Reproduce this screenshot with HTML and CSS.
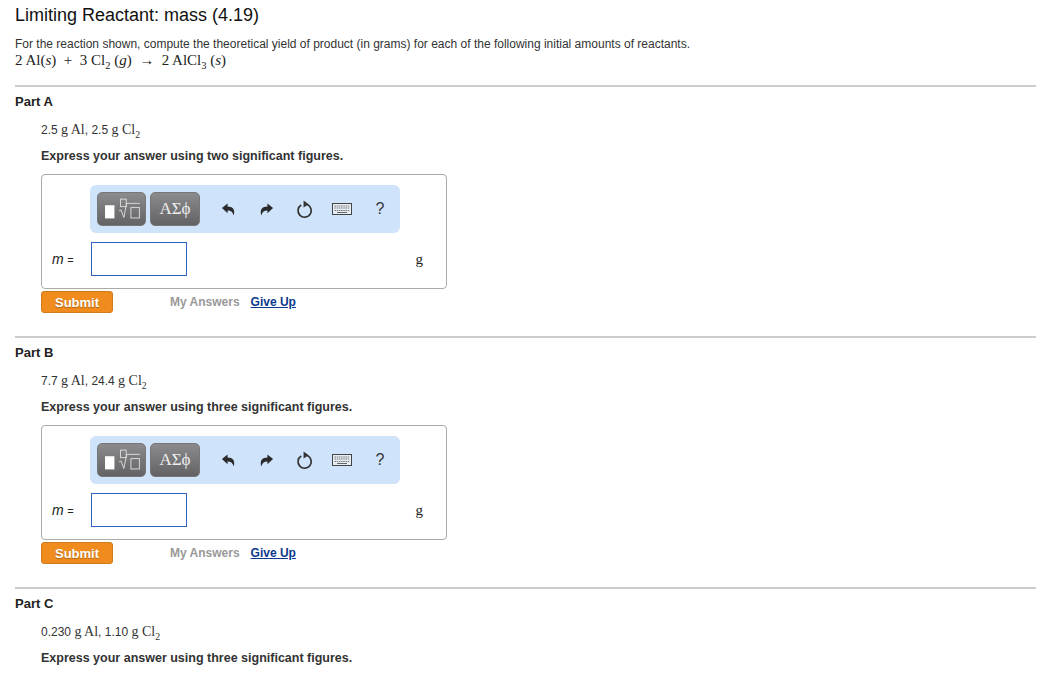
FILE: index.html
```html
<!DOCTYPE html>
<html lang="en">
<head>
  <meta charset="UTF-8" />
  <title>Limiting Reactant: mass (4.19)</title>
  <link rel="stylesheet" href="styles.css">
</head>
<body>
  <svg class="icon-defs" xmlns="http://www.w3.org/2000/svg">
    <symbol id="i-template" viewBox="0 0 49 34">
      <rect x="7" y="13" width="10" height="14" fill="#fff"/>
      <rect x="23.5" y="6.5" width="6" height="8" fill="none" stroke="#ddd" stroke-width="1"/>
      <path d="M22 19l2-1 3 8 3-15h14" fill="none" stroke="#ddd" stroke-width="1"/>
      <rect x="34.5" y="15.5" width="9" height="11" fill="none" stroke="#ddd" stroke-width="1"/>
    </symbol>
    <symbol id="i-undo" viewBox="0 0 16 16">
      <path d="M1 6.5L7 1.500V4.700C12.500 4.700 15.500 8 13.500 14.500C12.800 11 10.800 9 7 9V12Z" fill="#2b2b2b"/>
    </symbol>
    <symbol id="i-redo" viewBox="0 0 16 16">
      <path d="M15 6.500L9 1.500V4.700C3.500 4.700 .5 8 2.500 14.500C3.200 11 5.200 9 9 9V12Z" fill="#2b2b2b"/>
    </symbol>
    <symbol id="i-reset" viewBox="0 0 18 20">
      <path d="M5.500 5.200A7 7 0 1 0 12 4.800" fill="none" stroke="#333" stroke-width="1.800"/>
      <path d="M8 .5L13.500 4.500L8 8Z" fill="#333"/>
    </symbol>
    <symbol id="i-keys" viewBox="0 0 20 12">
      <rect x=".5" y=".5" width="19" height="11" fill="#e8eef5" stroke="#444"/>
      <path d="M2.500 3h15M2.500 5h15" stroke="#777" stroke-width="1" stroke-dasharray="1.500 .7"/>
      <path d="M2.500 7.500h15" stroke="#777" stroke-width="1" stroke-dasharray="1.500 .7"/>
      <path d="M5 9.500h10" stroke="#666" stroke-width="1"/>
    </symbol>
  </svg>

  <div class="page">
    <h1>Limiting Reactant: mass (4.19)</h1>
    <p class="intro">For the reaction shown, compute the theoretical yield of product (in grams) for each of the following initial amounts of reactants.</p>
    <p class="equation">2 Al(<i>s</i>) &nbsp;+&nbsp; 3 Cl<sub>2</sub> (<i>g</i>) &nbsp;→&nbsp; 2 AlCl<sub>3</sub> (<i>s</i>)</p>

    <section class="part">
      <h2>Part A</h2>
      <p class="amounts">2.5 <span class="m">g Al</span>, 2.5 <span class="m">g Cl<sub>2</sub></span></p>
      <p class="hint">Express your answer using two significant figures.</p>
      <div class="answer-box">
        <div class="toolbar">
          <button class="tool-btn"><svg class="tpl"><use href="#i-template"/></svg></button>
          <button class="tool-btn greek">ΑΣϕ</button>
          <span class="tool first"><svg class="ico"><use href="#i-undo"/></svg></span>
          <span class="tool"><svg class="ico"><use href="#i-redo"/></svg></span>
          <span class="tool"><svg class="ico-reset"><use href="#i-reset"/></svg></span>
          <span class="tool"><svg class="ico-keys"><use href="#i-keys"/></svg></span>
          <span class="tool help">?</span>
        </div>
        <div class="answer-row">
          <span class="var"><i>m</i> <small>=</small></span>
          <input class="answer-input" type="text" />
          <span class="unit">g</span>
        </div>
      </div>
      <div class="actions">
        <button class="submit">Submit</button>
        <a class="my-answers">My Answers</a>
        <a class="give-up" href="#">Give Up</a>
      </div>
    </section>

    <section class="part">
      <h2>Part B</h2>
      <p class="amounts">7.7 <span class="m">g Al</span>, 24.4 <span class="m">g Cl<sub>2</sub></span></p>
      <p class="hint">Express your answer using three significant figures.</p>
      <div class="answer-box">
        <div class="toolbar">
          <button class="tool-btn"><svg class="tpl"><use href="#i-template"/></svg></button>
          <button class="tool-btn greek">ΑΣϕ</button>
          <span class="tool first"><svg class="ico"><use href="#i-undo"/></svg></span>
          <span class="tool"><svg class="ico"><use href="#i-redo"/></svg></span>
          <span class="tool"><svg class="ico-reset"><use href="#i-reset"/></svg></span>
          <span class="tool"><svg class="ico-keys"><use href="#i-keys"/></svg></span>
          <span class="tool help">?</span>
        </div>
        <div class="answer-row">
          <span class="var"><i>m</i> <small>=</small></span>
          <input class="answer-input" type="text" />
          <span class="unit">g</span>
        </div>
      </div>
      <div class="actions">
        <button class="submit">Submit</button>
        <a class="my-answers">My Answers</a>
        <a class="give-up" href="#">Give Up</a>
      </div>
    </section>

    <section class="part last">
      <h2>Part C</h2>
      <p class="amounts">0.230 <span class="m">g Al</span>, 1.10 <span class="m">g Cl<sub>2</sub></span></p>
      <p class="hint">Express your answer using three significant figures.</p>
    </section>
  </div>
</body>
</html>
```

FILE: styles.css
```css
* {
  box-sizing: border-box;
  margin: 0;
  padding: 0;
  font-family: "Liberation Sans", Arial, sans-serif;
}

body {
  background-color: white;
  color: #222;
  overflow: hidden;
}

.icon-defs {
  display: none;
}

.page {
  padding: 4px 15px 0;
}

h1 {
  font-size: 18px;
  font-weight: normal;
  line-height: 22px;
  color: #111;
}

.intro {
  margin-top: 10px;
  font-size: 12px;
  line-height: 16px;
  color: #333;
}

.equation {
  font-family: "Liberation Serif", serif;
  font-size: 15px;
  line-height: 16px;
}

.equation i,
.equation sub,
.amounts .m,
.amounts sub {
  font-family: "Liberation Serif", serif;
}

sub {
  font-size: 70%;
  line-height: 0;
}

.part {
  margin-top: 17px;
  padding-top: 7px;
  border-top: 2px solid #ccc;
  height: 251px;
}

.part + .part {
  margin-top: 0;
}

.part.last {
  height: auto;
}

h2 {
  font-size: 13px;
  line-height: 16px;
  color: #222;
}

.amounts {
  margin: 12px 0 0 26px;
  font-size: 12px;
  line-height: 16px;
  color: #333;
}

.amounts .m {
  font-size: 14px;
}

.hint {
  margin: 10px 0 0 26px;
  font-size: 12.5px;
  font-weight: bold;
  line-height: 16px;
  color: #333;
}

.answer-box {
  margin: 10px 0 0 26px;
  width: 406px;
  height: 115px;
  border: 1px solid #aaa;
  border-radius: 4px;
  padding-top: 10px;
}

.toolbar {
  display: flex;
  align-items: center;
  margin-left: 48px;
  width: 310px;
  height: 48px;
  padding-left: 7px;
  background-color: #cfe3fb;
  border-radius: 6px;
}

.tool-btn {
  width: 49px;
  height: 34px;
  margin-right: 4px;
  border: 1px solid #777;
  border-radius: 5px;
  background: linear-gradient(#8b8b8e, #636365);
  color: #eee;
}

.tool-btn.greek {
  width: 50px;
  font-family: "Liberation Serif", serif;
  font-size: 17px;
}

.tpl {
  display: block;
  width: 47px;
  height: 32px;
}

.tool {
  display: flex;
  justify-content: center;
  align-items: center;
  width: 38px;
}

.tool.first {
  margin-left: 5px;
}

.ico {
  width: 15px;
  height: 15px;
}

.ico-reset {
  width: 17px;
  height: 19px;
}

.ico-keys {
  width: 20px;
  height: 12px;
}

.help {
  font-size: 16px;
  color: #333;
}

.answer-row {
  display: flex;
  align-items: center;
  margin-top: 9px;
  padding: 0 23px 0 10px;
}

.var {
  width: 39px;
  font-family: "Liberation Serif", serif;
  font-size: 14px;
}

.var small {
  font-family: "Liberation Sans", sans-serif;
  font-size: 11px;
}

.answer-input {
  width: 96px;
  height: 34px;
  border: 1px solid #2f62c0;
  background-color: white;
}

.unit {
  margin-left: auto;
  font-family: "Liberation Serif", serif;
  font-size: 15px;
}

.actions {
  display: flex;
  align-items: center;
  margin: 2px 0 0 26px;
  height: 22px;
  font-size: 12px;
  font-weight: bold;
}

.submit {
  width: 72px;
  height: 22px;
  border: 1px solid #cf7a1d;
  border-radius: 3px;
  background-color: #f08c1e;
  color: white;
  font-size: 13px;
  font-weight: bold;
  text-shadow: 0 1px 1px rgba(0, 0, 0, 0.3);
}

.my-answers {
  margin-left: 57px;
  color: #999;
}

.give-up {
  margin-left: 11px;
  color: #0b3a8e;
}
```
